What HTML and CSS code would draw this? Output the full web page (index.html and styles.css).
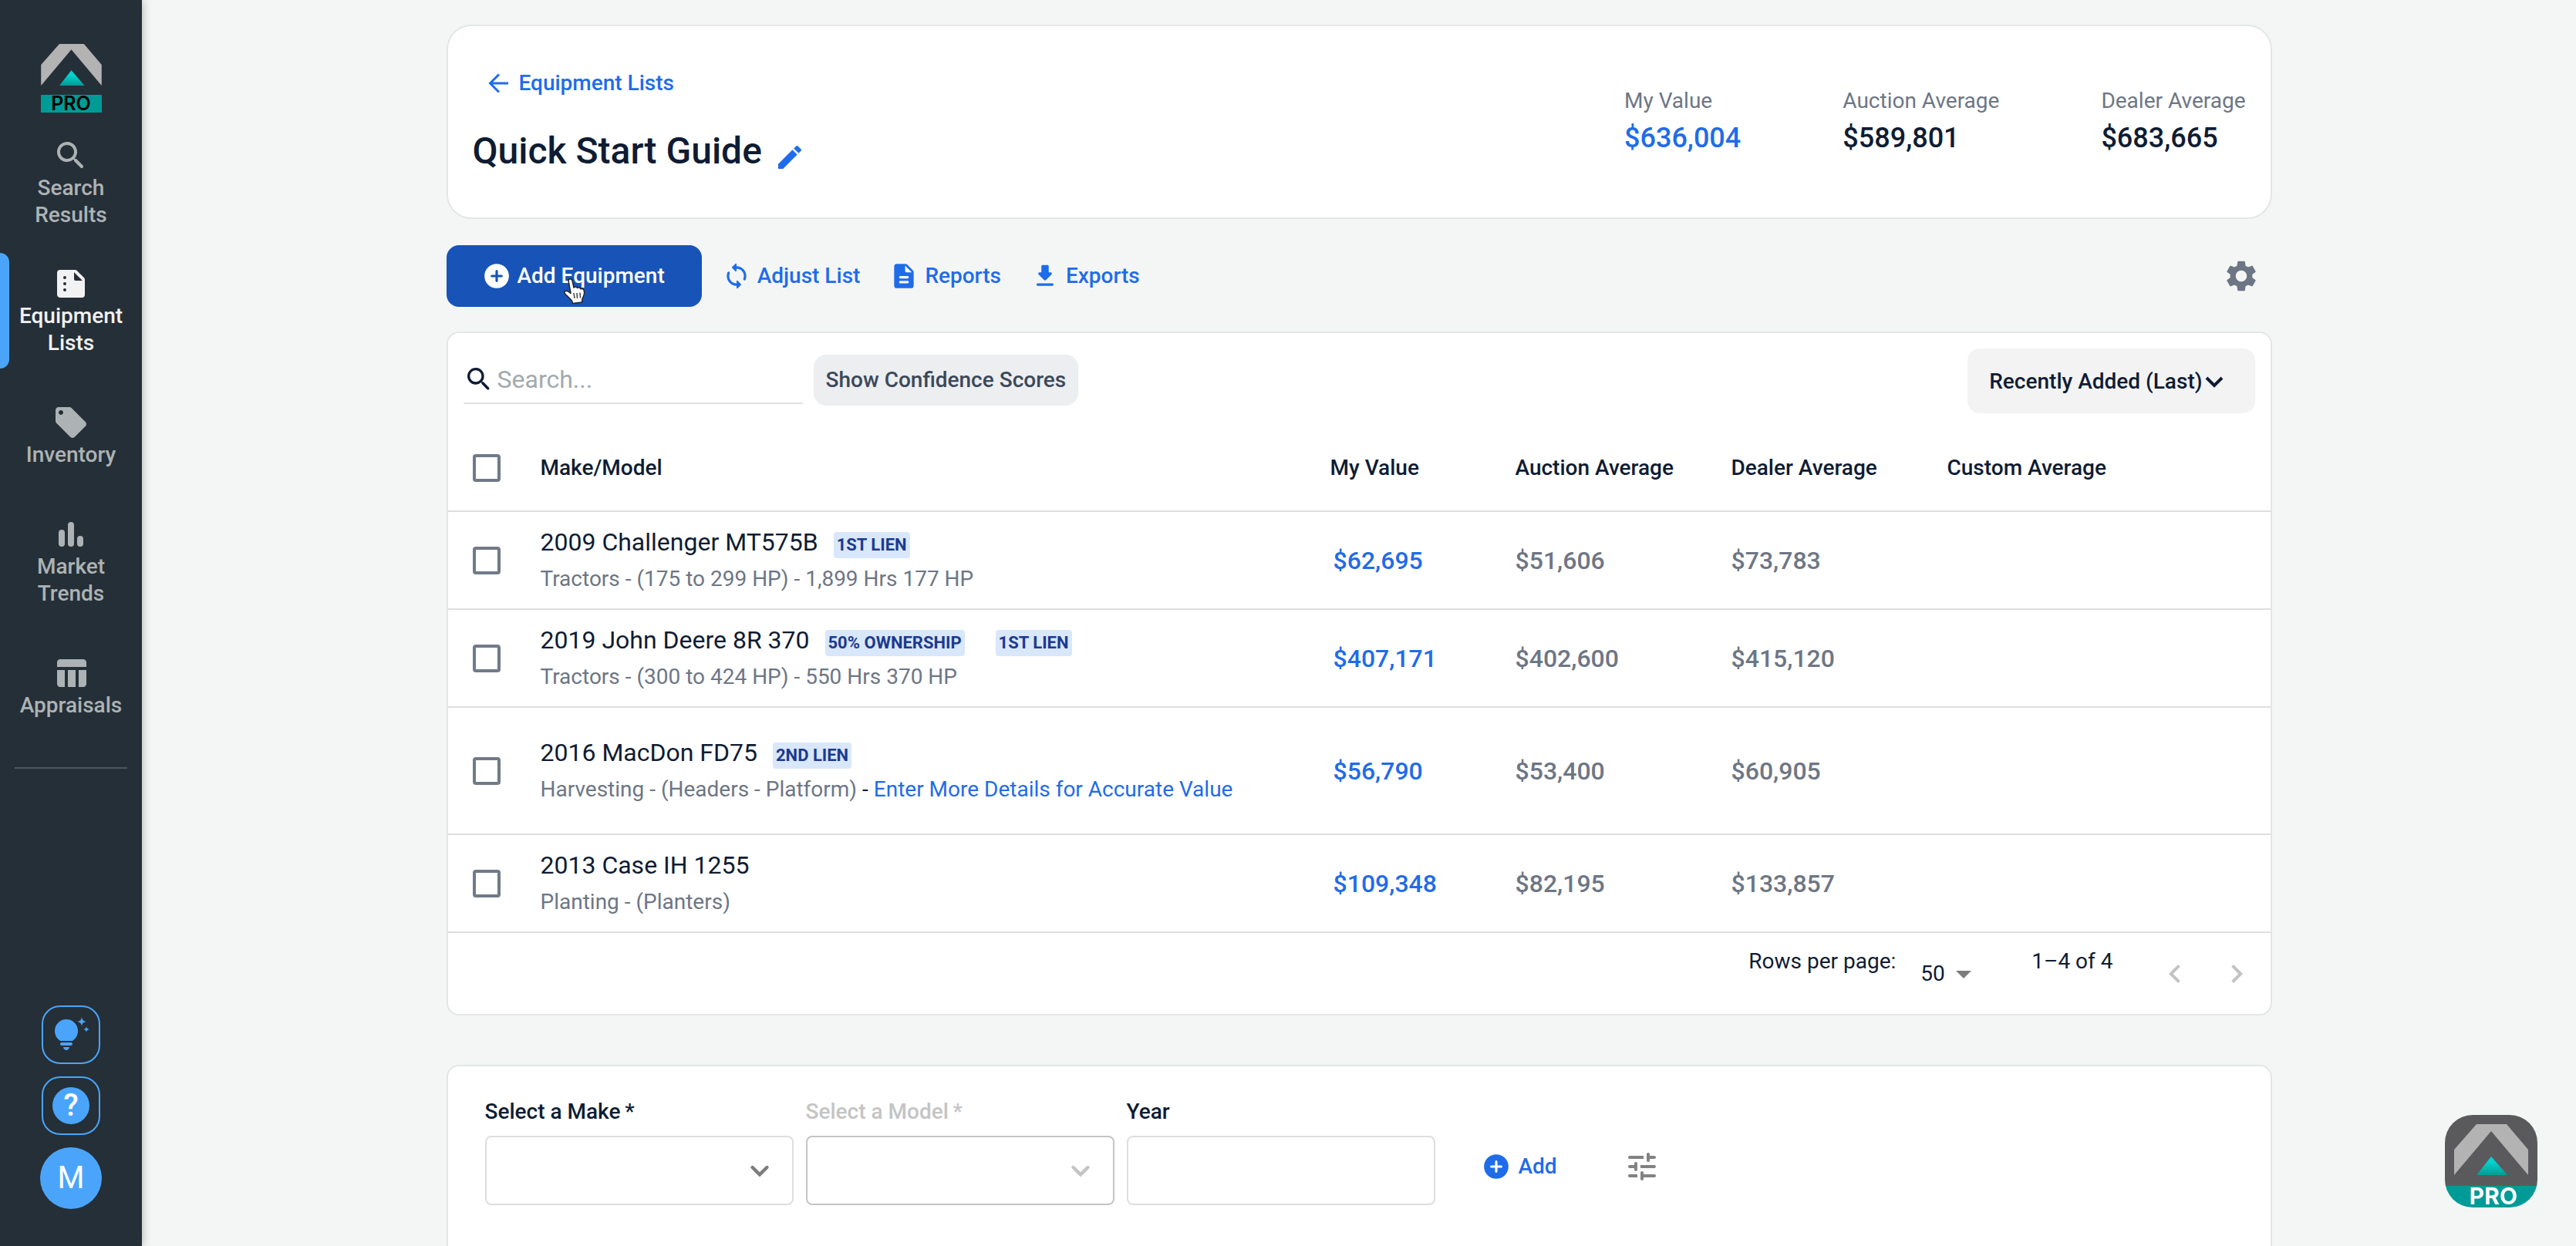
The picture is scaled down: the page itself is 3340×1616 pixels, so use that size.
FILE: index.html
```html
<!DOCTYPE html>
<html lang="en">
<head>
<meta charset="utf-8">
<title>Quick Start Guide - Equipment Lists</title>
<link rel="stylesheet" href="styles.css">
</head>
<body>
<svg class="sprite" aria-hidden="true">
  <defs>
    <linearGradient id="teal" x1="0" y1="0" x2="0" y2="1">
      <stop offset="0.3" stop-color="#04d2ce"/>
      <stop offset="1" stop-color="#069994"/>
    </linearGradient>
    <symbol id="mark" viewBox="0 0 96 66">
      <path fill="#b3b3b3" d="M29 0h39l28 33v33L48 9 0 66V33z"/>
      <path fill="url(#teal)" d="M48 42l21 24H29z"/>
    </symbol>
    <symbol id="plus-circle" viewBox="0 0 24 24"><path d="M12 2a10 10 0 1 0 0 20 10 10 0 0 0 0-20zm4 11h-3v3a1 1 0 0 1-2 0v-3H8a1 1 0 0 1 0-2h3V8a1 1 0 0 1 2 0v3h3a1 1 0 0 1 0 2z"/></symbol>
    <symbol id="search" viewBox="0 0 24 24"><path d="M15.5 14h-.79l-.28-.27a6.5 6.5 0 0 0 1.48-5.34c-.47-2.78-2.79-5-5.59-5.34a6.505 6.505 0 0 0-7.27 7.27c.34 2.8 2.56 5.12 5.34 5.59a6.5 6.5 0 0 0 5.34-1.48l.27.28v.79l4.25 4.25c.41.41 1.08.41 1.49 0 .41-.41.41-1.08 0-1.49L15.5 14zm-6 0C7.01 14 5 11.99 5 9.5S7.01 5 9.5 5 14 7.01 14 9.5 11.99 14 9.5 14z"/></symbol>
    <symbol id="chevron-down" viewBox="0 0 24 24"><path fill="none" stroke="currentColor" stroke-width="2.2" stroke-linecap="round" stroke-linejoin="miter" d="M7.300 10l4.700 4.700 4.700-4.700"/></symbol>
  </defs>
</svg>
<div class="app">
  <aside class="sidebar">
    <a class="brand" href="#" aria-label="Home">
      <svg class="brand-mark"><use href="#mark"/></svg>
      <span class="brand-pro">PRO</span>
    </a>
    <nav class="nav">
      <a class="nav-item nav-search" href="#">
        <svg class="icon-48"><use href="#search"/></svg>
        <span>Search<br>Results</span>
      </a>
      <a class="nav-item active" href="#" aria-current="page">
        <svg class="icon-48" viewBox="0 0 24 24"><path fill-rule="evenodd" d="M14.600 3H5a2 2 0 0 0-2 2v14c0 1.100.9 2 2 2h14a2 2 0 0 0 2-2V9.400a2 2 0 0 0-.6-1.400L16 3.600a2 2 0 0 0-1.400-.6zM8 17a1 1 0 1 1 0-2 1 1 0 0 1 0 2zm0-4a1 1 0 1 1 0-2 1 1 0 0 1 0 2zm0-4a1 1 0 1 1 0-2 1 1 0 0 1 0 2zm6 0V4.500l5.500 5.500H15a1 1 0 0 1-1-1z"/></svg>
        <span>Equipment<br>Lists</span>
      </a>
      <a class="nav-item" href="#">
        <svg class="icon-48" viewBox="0 0 24 24"><path d="M21.410 11.580l-9-9C12.050 2.220 11.550 2 11 2H4c-1.100 0-2 .9-2 2v7c0 .55.220 1.050.590 1.420l9 9c.360.360.860.580 1.410.580s1.050-.220 1.410-.590l7-7c.370-.360.590-.860.590-1.410s-.230-1.060-.590-1.420zM5.500 7C4.670 7 4 6.330 4 5.500S4.670 4 5.500 4 7 4.670 7 5.500 6.330 7 5.500 7z"/></svg>
        <span>Inventory</span>
      </a>
      <a class="nav-item" href="#">
        <svg class="icon-48" viewBox="0 0 24 24"><rect x="4" y="9" width="4" height="11" rx="2"/><rect x="10" y="4" width="4" height="16" rx="2"/><rect x="16" y="13" width="4" height="7" rx="2"/></svg>
        <span>Market<br>Trends</span>
      </a>
      <a class="nav-item" href="#">
        <svg class="icon-48" viewBox="0 0 24 24"><path d="M10 10.020h5V21h-5zM17 21h3c1.100 0 2-.9 2-2v-9h-5v11zm3-18H5c-1.100 0-2 .9-2 2v3h19V5c0-1.100-.9-2-2-2zM3 19c0 1.100.9 2 2 2h3V10H3v9z"/></svg>
        <span>Appraisals</span>
      </a>
    </nav>
    <hr class="nav-rule">
    <div class="side-tools">
      <button class="side-button" type="button" aria-label="Tips">
        <svg class="icon-48" viewBox="0 0 48 48"><path d="M18 4a15 15 0 0 0-15 15c0 6 3 10 7 13h16c4-3 7-7 7-13A15 15 0 0 0 18 4z"/><rect x="10" y="34" width="16" height="4" rx="2"/><path d="M14 40h8c0 2-2 4-4 4s-4-2-4-4z"/><path d="M38 1c.700 4 2 5.300 6 6-4 .7-5.300 2-6 6-.7-4-2-5.300-6-6 4-.7 5.300-2 6-6zM44 13c.4 2.700 1.300 3.600 4 4-2.700.4-3.600 1.300-4 4-.4-2.700-1.300-3.600-4-4 2.700-.4 3.600-1.300 4-4z"/></svg>
      </button>
      <button class="side-button" type="button" aria-label="Help"><span class="help-dot">?</span></button>
      <button class="avatar" type="button" aria-label="Account">M</button>
    </div>
  </aside>

  <main class="main">
    <div class="content">
      <header class="card header-card">
        <div class="heading">
          <a class="back-link" href="#">
            <svg class="arrow" viewBox="0 0 26 26"><path fill="none" stroke="currentColor" stroke-width="3" d="M26 13H3M14 1.500L2.500 13 14 24.500"/></svg>
            Equipment Lists
          </a>
          <div class="title-row">
            <h1>Quick Start Guide</h1>
            <button class="plain" type="button" aria-label="Rename list">
              <svg class="icon-40" viewBox="0 0 24 24"><path d="M3 17.460v3.040c0 .280.220.5.5.5h3.040c.130 0 .260-.05.350-.150L17.810 9.940l-3.750-3.750L3.150 17.100c-.1.100-.150.220-.150.360zM20.710 7.040a1 1 0 0 0 0-1.410l-2.340-2.340a1 1 0 0 0-1.410 0l-1.830 1.830 3.750 3.750 1.830-1.830z"/></svg>
            </button>
          </div>
        </div>
        <dl class="stats">
          <div><dt>My Value</dt><dd class="accent">$636,004</dd></div>
          <div><dt>Auction Average</dt><dd>$589,801</dd></div>
          <div><dt>Dealer Average</dt><dd>$683,665</dd></div>
        </dl>
      </header>

      <div class="actions">
        <button class="primary" type="button">
          <svg class="icon-38"><use href="#plus-circle"/></svg>Add Equipment
          <svg class="pointer" viewBox="0 0 32 34"><path fill="#fff" stroke="#222" stroke-width="1.500" stroke-linejoin="round" d="M8 3c0-3 4.500-3 5 0l2 9c1-1.500 4-1.500 4.500.5 1.500-1.200 4-.8 4.500 1.200 2-.8 4 .3 4.300 2.300.9 4-.3 7-2.300 10.500l-.5 4.500-12 1.500-1-3.500c-3-3-5.500-6-8.500-8.500-3-3 .5-5.500 3.500-3.500l3.500 2.500z"/><path stroke="#444" stroke-width="1.500" fill="none" d="M15 19l1 7M19 19l.5 7M23 18.500l.5 7"/></svg>
        </button>
        <button class="text-button" type="button">
          <svg class="icon-38" viewBox="0 0 24 24"><path d="M12 4V2.210c0-.450-.540-.670-.850-.350l-2.800 2.790c-.2.200-.2.510 0 .710l2.790 2.790c.320.310.860.090.860-.360V6c3.310 0 6 2.690 6 6 0 .790-.150 1.560-.440 2.250-.150.360-.040.770.230 1.040.510.510 1.370.330 1.640-.340.370-.910.570-1.910.570-2.950 0-4.420-3.580-8-8-8zm0 14c-3.310 0-6-2.690-6-6 0-.790.150-1.560.440-2.250.150-.360.040-.770-.230-1.040-.510-.510-1.370-.330-1.640.340C4.200 9.960 4 10.960 4 12c0 4.420 3.580 8 8 8v1.790c0 .450.540.670.850.350l2.790-2.790c.2-.2.200-.510 0-.710l-2.790-2.790c-.310-.310-.850-.090-.850.360V18z"/></svg>Adjust List
        </button>
        <button class="text-button" type="button">
          <svg class="icon-38" viewBox="0 0 24 24"><path d="M14.590 2.590c-.380-.380-.890-.590-1.420-.590H6c-1.100 0-2 .9-2 2v16c0 1.100.9 2 2 2h12c1.100 0 2-.9 2-2V8.830c0-.530-.210-1.040-.590-1.410l-4.820-4.830zM15 18H9c-.550 0-1-.450-1-1s.450-1 1-1h6c.550 0 1 .450 1 1s-.450 1-1 1zm0-4H9c-.550 0-1-.450-1-1s.450-1 1-1h6c.550 0 1 .450 1 1s-.450 1-1 1zm-2-6V3.500L18.500 9H14c-.550 0-1-.450-1-1z"/></svg>Reports
        </button>
        <button class="text-button" type="button">
          <svg class="icon-38" viewBox="0 0 24 24"><path d="M16.590 9H15V4c0-.550-.450-1-1-1h-4c-.550 0-1 .450-1 1v5H7.410c-.890 0-1.340 1.080-.710 1.710l4.590 4.590c.390.390 1.020.390 1.410 0l4.590-4.590c.630-.630.190-1.710-.700-1.710zM5 19c0 .550.450 1 1 1h12c.550 0 1-.450 1-1s-.450-1-1-1H6c-.550 0-1 .450-1 1z"/></svg>Exports
        </button>
        <button class="plain gear" type="button" aria-label="Settings">
          <svg class="icon-48" viewBox="0 0 24 24"><path d="M19.140 12.940c.040-.3.060-.610.060-.940 0-.320-.020-.640-.070-.940l2.030-1.580c.180-.140.230-.410.120-.610l-1.920-3.320c-.120-.220-.370-.290-.590-.220l-2.390.960c-.5-.380-1.030-.7-1.620-.940l-.360-2.540c-.040-.240-.240-.410-.480-.410h-3.840c-.240 0-.430.170-.470.410l-.360 2.540c-.590.240-1.130.570-1.620.940l-2.390-.960c-.220-.080-.470 0-.590.220L2.740 8.870c-.120.210-.080.470.120.610l2.030 1.580c-.050.3-.090.630-.090.940s.020.640.070.940l-2.030 1.580c-.180.140-.230.410-.120.610l1.920 3.320c.120.220.370.290.590.220l2.390-.960c.5.380 1.030.7 1.620.940l.360 2.540c.050.240.240.410.480.410h3.840c.240 0 .440-.170.470-.410l.360-2.540c.590-.240 1.130-.560 1.620-.940l2.390.960c.220.080.470 0 .590-.220l1.920-3.320c.120-.220.070-.470-.120-.610l-2.010-1.580zM12 15.600c-1.980 0-3.600-1.620-3.600-3.600s1.620-3.600 3.600-3.600 3.600 1.620 3.600 3.600-1.620 3.600-3.600 3.600z"/></svg>
        </button>
      </div>

      <section class="card list-card">
        <div class="filters">
          <label class="search-field">
            <svg class="icon-40"><use href="#search"/></svg>
            <input type="text" placeholder="Search..." aria-label="Search">
          </label>
          <button class="chip" type="button">Show Confidence Scores</button>
          <button class="sort" type="button">Recently Added (Last)<svg viewBox="0 0 32 32"><path fill="none" stroke="currentColor" stroke-width="4" d="M5 11l10 10 10-10"/></svg></button>
        </div>
        <table>
          <colgroup><col class="c-check"><col><col class="c-mine"><col class="c-avg"><col class="c-avg"><col class="c-custom"></colgroup>
          <thead>
            <tr><th class="check"><input type="checkbox" aria-label="Select all"></th><th>Make/Model</th><th>My Value</th><th>Auction Average</th><th>Dealer Average</th><th>Custom Average</th></tr>
          </thead>
          <tbody>
            <tr>
              <td class="check"><input type="checkbox" aria-label="Select 2009 Challenger MT575B"></td>
              <td><div class="name">2009 Challenger MT575B<span class="badges"><span class="badge">1ST LIEN</span></span></div><div class="detail">Tractors - (175 to 299 HP) - 1,899 Hrs 177 HP</div></td>
              <td class="mine">$62,695</td><td class="num">$51,606</td><td class="num">$73,783</td><td></td>
            </tr>
            <tr>
              <td class="check"><input type="checkbox" aria-label="Select 2019 John Deere 8R 370"></td>
              <td><div class="name">2019 John Deere 8R 370<span class="badges"><span class="badge">50% OWNERSHIP</span><span class="badge">1ST LIEN</span></span></div><div class="detail">Tractors - (300 to 424 HP) - 550 Hrs 370 HP</div></td>
              <td class="mine">$407,171</td><td class="num">$402,600</td><td class="num">$415,120</td><td></td>
            </tr>
            <tr class="tall">
              <td class="check"><input type="checkbox" aria-label="Select 2016 MacDon FD75"></td>
              <td><div class="name">2016 MacDon FD75<span class="badges"><span class="badge">2ND LIEN</span></span></div><div class="detail">Harvesting - (Headers - Platform) <span class="dash">-</span> <a href="#">Enter More Details for Accurate Value</a></div></td>
              <td class="mine">$56,790</td><td class="num">$53,400</td><td class="num">$60,905</td><td></td>
            </tr>
            <tr>
              <td class="check"><input type="checkbox" aria-label="Select 2013 Case IH 1255"></td>
              <td><div class="name">2013 Case IH 1255</div><div class="detail">Planting - (Planters)</div></td>
              <td class="mine">$109,348</td><td class="num">$82,195</td><td class="num">$133,857</td><td></td>
            </tr>
          </tbody>
        </table>
        <div class="pager">
          <label class="pager-text" for="rows">Rows per page:</label>
          <div class="rows-select">
            <select id="rows"><option>50</option></select>
            <svg class="icon-48" viewBox="0 0 24 24"><path d="M7 10l5 5 5-5z"/></svg>
          </div>
          <span class="pager-text">1–4 of 4</span>
          <div class="pages">
            <button class="plain" type="button" disabled aria-label="Previous page"><svg class="icon-48" viewBox="0 0 24 24"><path d="M15.410 7.410L14 6l-6 6 6 6 1.410-1.410L10.830 12z"/></svg></button>
            <button class="plain" type="button" disabled aria-label="Next page"><svg class="icon-48" viewBox="0 0 24 24"><path d="M8.590 16.590L13.170 12 8.590 7.410 10 6l6 6-6 6z"/></svg></button>
          </div>
        </div>
      </section>

      <form class="card add-form">
        <div class="field">
          <label for="make">Select a Make&thinsp;*</label>
          <div class="picker"><select id="make"><option></option></select><svg class="icon-48"><use href="#chevron-down"/></svg></div>
        </div>
        <div class="field off">
          <label for="model">Select a Model&thinsp;*</label>
          <div class="picker"><select id="model" disabled><option></option></select><svg class="icon-48"><use href="#chevron-down"/></svg></div>
        </div>
        <div class="field">
          <label for="year">Year</label>
          <input id="year" type="text">
        </div>
        <div class="form-actions">
          <button class="text-button" type="button"><svg class="icon-38"><use href="#plus-circle"/></svg>Add</button>
          <button class="plain tune" type="button" aria-label="More options">
            <svg class="icon-48" viewBox="0 0 24 24"><path d="M3 18c0 .550.450 1 1 1h5v-2H4c-.550 0-1 .450-1 1zM3 6c0 .550.450 1 1 1h9V5H4c-.550 0-1 .450-1 1zm10 14v-1h7c.550 0 1-.450 1-1s-.450-1-1-1h-7v-1c0-.550-.450-1-1-1s-1 .450-1 1v4c0 .550.450 1 1 1s1-.450 1-1zM7 10v1H4c-.550 0-1 .450-1 1s.450 1 1 1h3v1c0 .550.450 1 1 1s1-.450 1-1v-4c0-.550-.450-1-1-1s-1 .450-1 1zm14 2c0-.550-.450-1-1-1h-9v2h9c.550 0 1-.450 1-1zm-5-3c.550 0 1-.450 1-1V7h3c.550 0 1-.450 1-1s-.450-1-1-1h-3V4c0-.550-.450-1-1-1s-1 .450-1 1v4c0 .550.450 1 1 1z"/></svg>
          </button>
        </div>
      </form>
    </div>
  </main>
</div>
<button class="launcher" type="button" aria-label="Open Pro assistant">
  <svg class="launcher-mark"><use href="#mark"/></svg>
  <span class="launcher-pro">PRO</span>
</button>
</body>
</html>
```
FILE: styles.css
```css
:root {
  --ink: #0f1c33;
  --muted: #6d7685;
  --blue: #1f6ce9;
  --sky: #4aa5fa;
  --line: #dedede;
}
* { box-sizing: border-box; }
body {
  margin: 0;
  background: #f4f6f5;
  color: var(--ink);
  font: 400 28px/36px Roboto, sans-serif;
}
a { color: var(--blue); text-decoration: none; }
button, input, select { font: inherit; color: inherit; }
button { border: 0; background: none; padding: 0; cursor: pointer; }
svg { display: block; flex: none; fill: currentColor; }
.sprite { position: absolute; width: 0; height: 0; }
.icon-38 { width: 38px; height: 38px; }
.icon-40 { width: 40px; height: 40px; }
.icon-48 { width: 48px; height: 48px; }
.plain { display: block; color: var(--blue); }

.app { display: flex; height: 100vh; }

/* Sidebar */
.sidebar {
  flex: none;
  width: 184px;
  display: flex;
  flex-direction: column;
  align-items: center;
  padding: 57px 0 48px;
  background: #252f38;
  box-shadow: 0 0 12px rgba(0, 0, 0, 0.3);
  z-index: 1;
}
.brand { display: flex; flex-direction: column; gap: 12px; width: 79px; }
.brand-mark { width: 79px; height: 54px; }
.brand-pro {
  background: #009b97;
  color: #000;
  font: 600 25px/23px Inter, sans-serif;
  text-align: center;
}
.nav {
  display: flex;
  flex-direction: column;
  gap: 30px;
  width: 100%;
  padding-top: 16px;
}
.nav-item {
  position: relative;
  display: flex;
  flex-direction: column;
  align-items: center;
  padding: 16px 0;
  color: #adb3b4;
  font-weight: 500;
  line-height: 35px;
  text-align: center;
}
.nav-search { margin-bottom: -14px; }
.nav-item.active { color: #f2f2f2; }
.nav-item.active::before {
  content: "";
  position: absolute;
  left: 0;
  top: 0;
  bottom: 0;
  width: 12px;
  border-radius: 0 12px 12px 0;
  background: var(--sky);
}
.nav-rule { width: 146px; margin: 47px 0 0; border: 0; border-top: 2px solid #4c5661; }
.side-tools { display: flex; flex-direction: column; align-items: center; gap: 16px; margin-top: auto; }
.side-button {
  display: grid;
  place-items: center;
  width: 76px;
  height: 76px;
  border: 2px solid var(--sky);
  border-radius: 24px;
  color: var(--sky);
}
.help-dot {
  width: 48px;
  height: 48px;
  border-radius: 50%;
  background: var(--sky);
  color: #fff;
  font-size: 40px;
  font-weight: 500;
  line-height: 48px;
}
.avatar {
  width: 80px;
  height: 80px;
  border-radius: 50%;
  background: var(--sky);
  color: #fff;
  font-size: 40px;
}

/* Page */
.main { flex: 1; overflow-y: auto; scrollbar-width: none; }
.content { width: 75%; margin: 0 auto; padding-top: 32px; }
.card { background: #fff; border: 2px solid #e4e6e6; border-radius: 16px; }

.header-card {
  display: flex;
  justify-content: space-between;
  align-items: center;
  padding: 56px 32px 58px;
  border-radius: 32px;
}
.heading { display: flex; flex-direction: column; gap: 42px; }
.back-link { display: flex; align-items: center; gap: 14px; padding-left: 20px; font-weight: 500; }
.arrow { width: 26px; height: 26px; }
.title-row { display: flex; align-items: flex-end; gap: 16px; }
h1 { margin: 0; font-size: 48px; line-height: 56px; font-weight: 500; }
.stats { display: flex; gap: 132px; margin: 0; }
.stats dt { line-height: 44px; color: var(--muted); }
.stats dd { margin: 0; font-size: 36px; line-height: 52px; font-weight: 500; }
.stats .accent { color: var(--blue); }

.actions { display: flex; align-items: center; gap: 38px; margin: 34px 0 32px; }
.primary, .text-button { display: flex; align-items: center; gap: 8px; font-weight: 500; }
.primary {
  position: relative;
  height: 80px;
  margin-right: -12px;
  padding: 0 48px 0 46px;
  border-radius: 16px;
  background: #1854b8;
  color: #fff;
}
.pointer { position: absolute; left: 150px; top: 43px; width: 32px; height: 34px; }
.text-button { color: var(--blue); }
.gear { margin-left: auto; margin-right: 16px; color: var(--muted); }

/* Equipment list */
.filters { display: flex; align-items: center; gap: 14px; padding: 20px 20px 16px; }
.search-field, .chip { margin-bottom: 3px; }
.search-field {
  display: flex;
  align-items: center;
  gap: 4px;
  width: 440px;
  height: 62px;
  border-bottom: 2px solid #e0e0e0;
}
.search-field input {
  flex: 1;
  min-width: 0;
  padding: 0;
  border: 0;
  outline: 0;
  background: none;
  font-size: 32px;
}
.search-field input::placeholder { color: #a3a9ad; opacity: 1; }
.chip { height: 66px; padding: 0 16px; border-radius: 16px; background: #eceef0; color: #3c485a; font-weight: 500; }
.sort {
  display: flex;
  align-items: center;
  height: 84px;
  margin-left: auto;
  padding: 2px 36px 0 28px;
  border-radius: 16px;
  background: #f3f3f4;
  font-weight: 500;
}
.sort svg { width: 32px; height: 32px; }

table { width: 100%; table-layout: fixed; border-collapse: separate; border-spacing: 0; }
.c-check { width: 120px; }
.c-mine { width: 240px; }
.c-avg { width: 280px; }
.c-custom { width: 419px; }
th, td { padding: 0; border-bottom: 2px solid var(--line); text-align: left; vertical-align: middle; }
th { height: 112px; font-weight: 500; }
td { height: 127px; }
.tall td { height: 165px; }
.check { padding-left: 32px; }
.check input {
  appearance: none;
  display: block;
  width: 36px;
  height: 36px;
  margin: 0;
  border: 4px solid #717a88;
  border-radius: 4px;
}
.name { display: flex; align-items: baseline; gap: 20px; font-size: 32px; line-height: 46px; }
.badges { display: flex; gap: 40px; }
.badge {
  padding: 0 4px;
  border-radius: 4px;
  background: #d9e7fa;
  color: #1c3a8f;
  font-size: 22px;
  line-height: 34px;
  font-weight: 700;
}
.detail { padding-top: 3px; line-height: 44px; color: var(--muted); }
.dash { color: var(--ink); }
.mine, .num { font-size: 32px; font-weight: 500; color: var(--muted); }
.mine { padding-left: 4px; color: var(--blue); }

.pager { display: flex; align-items: center; justify-content: flex-end; height: 105px; padding-right: 20px; }
.pager-text { margin-bottom: 32px; }
.rows-select, .picker { display: grid; align-items: center; }
.rows-select > *, .picker > * { grid-area: 1 / 1; }
.rows-select svg, .picker svg { justify-self: end; pointer-events: none; }
.rows-select { width: 80px; margin: 0 64px 0 32px; }
.rows-select svg { color: #7c7c7c; }
select { appearance: none; border: 0; background: none; padding: 0; width: 100%; }
.pages { display: flex; gap: 32px; margin-left: 56px; }
.pages .plain { color: #c2c2c2; }

/* Add equipment form */
.add-form { display: flex; align-items: flex-end; gap: 16px; margin-top: 64px; padding: 41px 48px 160px; }
.field { display: flex; flex-direction: column; gap: 13px; width: 400px; font-weight: 500; }
.field input, .picker select {
  width: 100%;
  height: 90px;
  padding: 0 24px;
  border: 2px solid var(--line);
  border-radius: 8px;
  background: #fff;
}
.picker svg { margin-right: 20px; color: #7c7c7c; }
.off label, .off svg { color: #c4c4c4; }
.off select { border-color: #c4c4c4; opacity: 1; }
.form-actions { display: flex; align-items: center; height: 80px; margin: 0 0 10px 44px; gap: 86px; }
.form-actions .text-button { gap: 10px; }
.tune { color: #828282; }

.launcher {
  position: fixed;
  right: 50px;
  bottom: 50px;
  z-index: 2;
  display: flex;
  flex-direction: column;
  align-items: center;
  gap: 12px;
  width: 120px;
  height: 120px;
  padding-top: 12px;
  border-radius: 36px;
  background: linear-gradient(#5a5a5c 92px, #009b97 92px);
}
.launcher-mark { width: 96px; height: 66px; }
.launcher-pro {
  padding-left: 6px;
  color: #fff;
  font: 700 30px/30px Inter, sans-serif;
}
```
